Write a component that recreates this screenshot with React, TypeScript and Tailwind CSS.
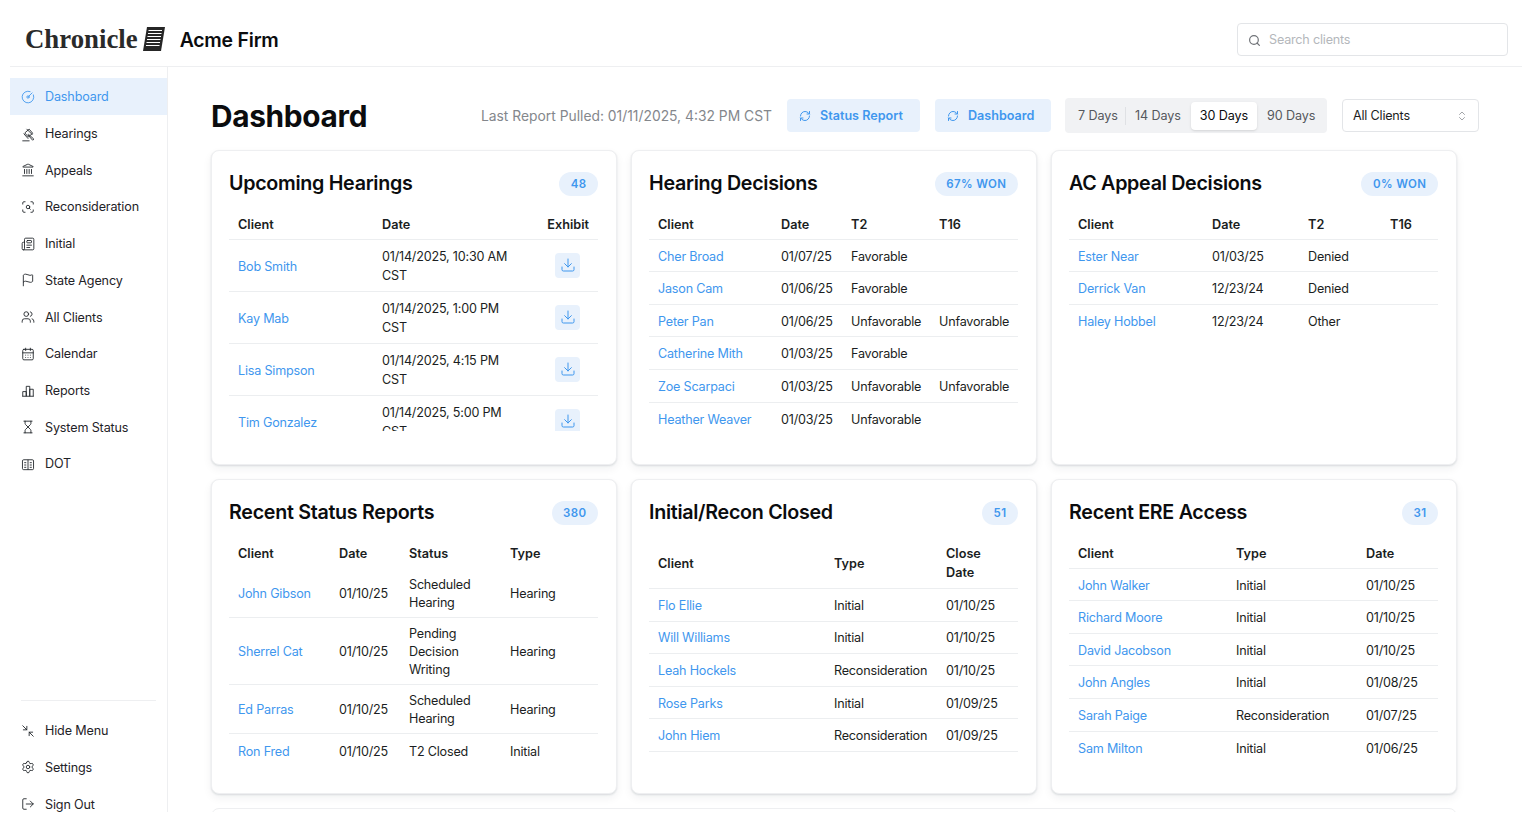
import {
  CalendarDays,
  ChevronsUpDown,
  CircleGauge,
  Download,
  Flag,
  Hourglass,
  Landmark,
  LogOut,
  Minimize2,
  Newspaper,
  RefreshCw,
  ScanSearch,
  Search,
  Settings,
  Users,
} from "lucide-react";
import type { ReactNode } from "react";

type IconProps = { size?: number; strokeWidth?: number; className?: string };

function ReportsIcon({ size, strokeWidth }: IconProps) {
  return (
    <svg
      width={size}
      height={size}
      viewBox="0 0 24 24"
      fill="none"
      stroke="currentColor"
      strokeWidth={strokeWidth}
      strokeLinejoin="round"
    >
      <path d="M2 21h20M3 21v-8h6v8M9 21V4h6v17M15 21V9h6v12" />
    </svg>
  );
}

function DotIcon({ size, strokeWidth }: IconProps) {
  return (
    <svg
      width={size}
      height={size}
      viewBox="0 0 24 24"
      fill="none"
      stroke="currentColor"
      strokeWidth={strokeWidth}
    >
      <rect x="2.5" y="3" width="19" height="17" rx="2" />
      <path d="M12 3v17M5.500 8h3.500M5.500 12h3.500M5.500 16h3.500M15 8h3.500M15 12h3.500M15 16h3.500" />
    </svg>
  );
}

function GavelIcon({ size, strokeWidth }: IconProps) {
  return (
    <svg
      width={size}
      height={size}
      viewBox="0 0 24 24"
      fill="none"
      stroke="currentColor"
      strokeWidth={strokeWidth}
      strokeLinejoin="round"
      strokeLinecap="round"
    >
      <path d="M3 22h11M13 11l9 8-2 2-8-9M7 8l7-6 6 7-7 6zM5 10l7 8M10 2l9 9" />
    </svg>
  );
}

const navItems = [
  { label: "Dashboard", icon: CircleGauge, active: true },
  { label: "Hearings", icon: GavelIcon },
  { label: "Appeals", icon: Landmark },
  { label: "Reconsideration", icon: ScanSearch },
  { label: "Initial", icon: Newspaper },
  { label: "State Agency", icon: Flag },
  { label: "All Clients", icon: Users },
  { label: "Calendar", icon: CalendarDays },
  { label: "Reports", icon: ReportsIcon },
  { label: "System Status", icon: Hourglass },
  { label: "DOT", icon: DotIcon },
];

const bottomItems = [
  { label: "Hide Menu", icon: Minimize2, iconClass: "-scale-x-100" },
  { label: "Settings", icon: Settings },
  { label: "Sign Out", icon: LogOut },
];

const hearings = [
  ["Bob Smith", "01/14/2025, 10:30 AM"],
  ["Kay Mab", "01/14/2025, 1:00 PM"],
  ["Lisa Simpson", "01/14/2025, 4:15 PM"],
  ["Tim Gonzalez", "01/14/2025, 5:00 PM"],
];

type Column = { label: string; width: string };

function NavLink({
  label,
  icon: Icon,
  active,
  iconClass,
}: {
  label: string;
  icon: typeof ReportsIcon;
  active?: boolean;
  iconClass?: string;
}) {
  return (
    <div
      className={`flex h-[36.7px] items-center gap-[10px] pt-[3px] pl-[11px] text-[12.6px] tracking-[-0.15px] ${
        active ? "bg-[#e8f1fc] text-[#3f97ee]" : "text-[#1f2328]"
      }`}
    >
      <Icon size={14} strokeWidth={1.5} className={`-translate-y-[1px] ${iconClass ?? ""}`} />
      <span>{label}</span>
    </div>
  );
}

function Card({
  title,
  badge,
  children,
}: {
  title: string;
  badge: string;
  children: ReactNode;
}) {
  return (
    <section className="h-[315px] overflow-hidden rounded-[8px] border border-[#eeeff1] bg-white pt-[21px] pr-[18px] pl-[17px] shadow-[0_1px_2px_rgba(20,30,50,0.12),0_4px_10px_rgba(20,30,50,0.06)]">
      <div className="mb-[12.6px] flex h-[24px] items-center justify-between">
        <h2 className="text-[19.7px] font-semibold tracking-[-0.3px] text-[#0b0c0e]">
          {title}
        </h2>
        <span className="rounded-full bg-[#e8f1fc] px-[11.5px] py-[3px] text-[11.5px] leading-[18px] font-semibold tracking-[0.4px] text-[#3f97ee]">
          {badge}
        </span>
      </div>
      {children}
    </section>
  );
}

function DataTable({
  columns,
  rows,
  lastBorder,
  plainHeader,
}: {
  columns: Column[];
  rows: string[][];
  lastBorder?: boolean;
  plainHeader?: boolean;
}) {
  return (
    <table className="w-full table-fixed border-separate border-spacing-0 text-[12.6px] leading-[18.3px] tracking-[-0.2px] text-[#1b1e22]">
      <thead>
        <tr>
          {columns.map((col) => (
            <th
              key={col.label}
              className={`border-b pt-[6px] pb-[4.8px] pl-[9px] text-left text-[12.7px] leading-[19.3px] font-semibold tracking-normal ${
                plainHeader ? "border-transparent" : "border-[#eceef0]"
              } ${col.width}`}
            >
              {col.label}
            </th>
          ))}
        </tr>
      </thead>
      <tbody>
        {rows.map((row, i) => (
          <tr key={row[0]}>
            {row.map((cell, j) => (
              <td
                key={j}
                className={`h-[32.6px] pt-[7px] pr-[4px] pb-[4.5px] pl-[9px] ${
                  i < rows.length - 1 || lastBorder
                    ? "border-b border-[#eceef0]"
                    : ""
                } ${j === 0 ? "text-[#3f97ee]" : ""}`}
              >
                {cell}
              </td>
            ))}
          </tr>
        ))}
      </tbody>
    </table>
  );
}

export default function App() {
  return (
    <div className="h-screen overflow-hidden bg-white font-['Inter',sans-serif]">
      <div className="ml-[10px] flex h-[812px] w-[1512px] flex-col overflow-hidden">
        <header className="flex h-[67px] shrink-0 items-center justify-between border-b border-[#eeeff1] pt-[13px] pr-[14px] pl-[15px]">
          <div className="flex items-center">
            <span className="font-['Liberation_Serif',serif] text-[26.8px] font-bold text-[#2a2a2a]">
              Chronicle
            </span>
            <svg width="22" height="24" viewBox="0 0 22 24" className="ml-[5px] -translate-y-[1px]">
              <path d="M4 0h18l-4 24H0z" fill="#262626" />
              <path
                d="M5.500 3.500h13.500M5 6.500h13.500M4.500 9.500h13.500M4 12.500h13.500M3.500 15.500h13.500M3 18.500h13.500"
                stroke="#fff"
                strokeWidth="1"
              />
            </svg>
            <span className="ml-[15px] pt-[2px] text-[19.4px] font-semibold tracking-[-0.2px] text-[#0b0c0e]">
              Acme Firm
            </span>
          </div>
          <div className="flex h-[33px] w-[271px] items-center gap-[8px] rounded-[4px] border border-[#e3e5e8] pt-[1px] pl-[10px] text-[12.6px] tracking-[-0.2px] text-[#b4b7bb]">
            <Search size={13} strokeWidth={2.2} className="text-[#6f7277]" />
            Search clients
          </div>
        </header>

        <div className="flex min-h-0 flex-1">
          <aside className="flex w-[158px] shrink-0 flex-col border-r border-[#eeeff1] pt-[11px]">
            <nav>
              {navItems.map((item) => (
                <NavLink key={item.label} {...item} />
              ))}
            </nav>
            <div className="mx-[11px] mt-auto h-px bg-[#eeeff1]" />
            <div className="-mb-[10px] pt-[11px]">
              {bottomItems.map((item) => (
                <NavLink key={item.label} {...item} />
              ))}
            </div>
          </aside>

          <main className="min-w-0 flex-1 overflow-hidden pt-[30px] pl-[43px]">
            <div className="flex h-[37px] w-[1268px] items-center whitespace-nowrap text-[12.6px]">
              <h1 className="mr-auto pt-[1px] text-[29.8px] font-bold tracking-[-0.3px] text-[#0b0c0e]">
                Dashboard
              </h1>
              <span className="mr-[15px] pt-[1px] text-[13.85px] text-[#84878c]">
                Last Report Pulled: 01/11/2025, 4:32 PM CST
              </span>
              <button className="mr-[15px] flex h-[33px] w-[133px] items-center gap-[9px] rounded-[4px] bg-[#e8f1fc] pt-[1px] pl-[12px] font-semibold text-[#3f97ee]">
                <RefreshCw size={12} strokeWidth={2} />
                Status Report
              </button>
              <button className="mr-[14px] flex h-[33px] w-[116px] items-center gap-[9px] rounded-[4px] bg-[#e8f1fc] pt-[1px] pl-[12px] font-semibold text-[#3f97ee]">
                <RefreshCw size={12} strokeWidth={2} />
                Dashboard
              </button>
              <div className="mr-[15px] flex h-[35px] w-[262px] items-center rounded-[4px] bg-[#f1f2f4] pt-[1px] tracking-[-0.1px] text-[#55585d]">
                <span className="w-[61px] border-r border-[#dfe1e4] pl-[13px]">7 Days</span>
                <span className="w-[65px] pl-[9px]">14 Days</span>
                <span className="flex h-[28px] w-[66px] items-center justify-center rounded-[4px] bg-white text-[#0b0c0e] shadow-sm">
                  30 Days
                </span>
                <span className="pl-[10px]">90 Days</span>
              </div>
              <div className="flex h-[33px] w-[137px] items-center justify-between rounded-[4px] border border-[#e3e5e8] pt-[1px] pr-[10px] pl-[10px] tracking-[-0.2px] text-[#1b1e22]">
                All Clients
                <ChevronsUpDown size={12} strokeWidth={1.5} className="text-[#84878c]" />
              </div>
            </div>

            <div className="mt-[16px] grid w-[1246px] grid-cols-3 gap-x-[14px] gap-y-[14px]">
              <Card title="Upcoming Hearings" badge="48">
                <div className="h-[222px] overflow-hidden">
                  <table className="w-full table-fixed border-separate border-spacing-0 text-[12.6px] leading-[19px] tracking-[-0.2px] text-[#1b1e22]">
                    <thead>
                      <tr>
                        <th className="w-[144px] border-b border-[#eceef0] pt-[6px] pb-[4.8px] pl-[9px] text-left text-[12.7px] leading-[19.3px] font-semibold tracking-normal">Client</th>
                        <th className="border-b border-[#eceef0] pt-[6px] pb-[4.8px] pl-[9px] text-left text-[12.7px] leading-[19.3px] font-semibold tracking-normal">Date</th>
                        <th className="w-[60px] border-b border-[#eceef0] pt-[6px] pr-[9px] pb-[4.8px] text-right text-[12.7px] leading-[19.3px] font-semibold tracking-normal">Exhibit</th>
                      </tr>
                    </thead>
                    <tbody>
                      {hearings.map((row) => (
                        <tr key={row[0]}>
                          <td className="h-[52px] border-b border-[#eceef0] pt-[2px] pl-[9px] text-[#3f97ee]">{row[0]}</td>
                          <td className="h-[52px] border-b border-[#eceef0] px-[9px] pt-[1px]">
                            {row[1]}
                            <br />
                            CST
                          </td>
                          <td className="h-[52px] border-b border-[#eceef0] pr-[18px]">
                            <span className="ml-auto flex h-[25px] w-[25px] items-center justify-center rounded-[4px] bg-[#e8f1fc] text-[#3f97ee]">
                              <Download size={16} strokeWidth={1.5} />
                            </span>
                          </td>
                        </tr>
                      ))}
                    </tbody>
                  </table>
                </div>
              </Card>

              <Card title="Hearing Decisions" badge="67% WON">
                <DataTable
                  columns={[
                    { label: "Client", width: "w-[123px]" },
                    { label: "Date", width: "w-[70px]" },
                    { label: "T2", width: "w-[88px]" },
                    { label: "T16", width: "" },
                  ]}
                  rows={[
                    ["Cher Broad", "01/07/25", "Favorable", ""],
                    ["Jason Cam", "01/06/25", "Favorable", ""],
                    ["Peter Pan", "01/06/25", "Unfavorable", "Unfavorable"],
                    ["Catherine Mith", "01/03/25", "Favorable", ""],
                    ["Zoe Scarpaci", "01/03/25", "Unfavorable", "Unfavorable"],
                    ["Heather Weaver", "01/03/25", "Unfavorable", ""],
                  ]}
                />
              </Card>

              <Card title="AC Appeal Decisions" badge="0% WON">
                <DataTable
                  columns={[
                    { label: "Client", width: "w-[134px]" },
                    { label: "Date", width: "w-[96px]" },
                    { label: "T2", width: "w-[82px]" },
                    { label: "T16", width: "" },
                  ]}
                  rows={[
                    ["Ester Near", "01/03/25", "Denied", ""],
                    ["Derrick Van", "12/23/24", "Denied", ""],
                    ["Haley Hobbel", "12/23/24", "Other", ""],
                  ]}
                />
              </Card>

              <Card title="Recent Status Reports" badge="380">
                <DataTable
                  plainHeader
                  columns={[
                    { label: "Client", width: "w-[101px]" },
                    { label: "Date", width: "w-[70px]" },
                    { label: "Status", width: "w-[101px]" },
                    { label: "Type", width: "" },
                  ]}
                  rows={[
                    ["John Gibson", "01/10/25", "Scheduled Hearing", "Hearing"],
                    ["Sherrel Cat", "01/10/25", "Pending Decision Writing", "Hearing"],
                    ["Ed Parras", "01/10/25", "Scheduled Hearing", "Hearing"],
                    ["Ron Fred", "01/10/25", "T2 Closed", "Initial"],
                  ]}
                />
              </Card>

              <Card title="Initial/Recon Closed" badge="51">
                <DataTable
                  lastBorder
                  columns={[
                    { label: "Client", width: "w-[176px]" },
                    { label: "Type", width: "w-[112px]" },
                    { label: "Close Date", width: "h-[51.4px] pr-[20px]" },
                  ]}
                  rows={[
                    ["Flo Ellie", "Initial", "01/10/25"],
                    ["Will Williams", "Initial", "01/10/25"],
                    ["Leah Hockels", "Reconsideration", "01/10/25"],
                    ["Rose Parks", "Initial", "01/09/25"],
                    ["John Hiem", "Reconsideration", "01/09/25"],
                  ]}
                />
              </Card>

              <Card title="Recent ERE Access" badge="31">
                <DataTable
                  columns={[
                    { label: "Client", width: "w-[158px]" },
                    { label: "Type", width: "w-[130px]" },
                    { label: "Date", width: "" },
                  ]}
                  rows={[
                    ["John Walker", "Initial", "01/10/25"],
                    ["Richard Moore", "Initial", "01/10/25"],
                    ["David Jacobson", "Initial", "01/10/25"],
                    ["John Angles", "Initial", "01/08/25"],
                    ["Sarah Paige", "Reconsideration", "01/07/25"],
                    ["Sam Milton", "Initial", "01/06/25"],
                  ]}
                />
              </Card>

              <div className="col-span-3 h-[40px] rounded-[8px] border border-[#eeeff1] bg-white" />
            </div>
          </main>
        </div>
      </div>
    </div>
  );
}
